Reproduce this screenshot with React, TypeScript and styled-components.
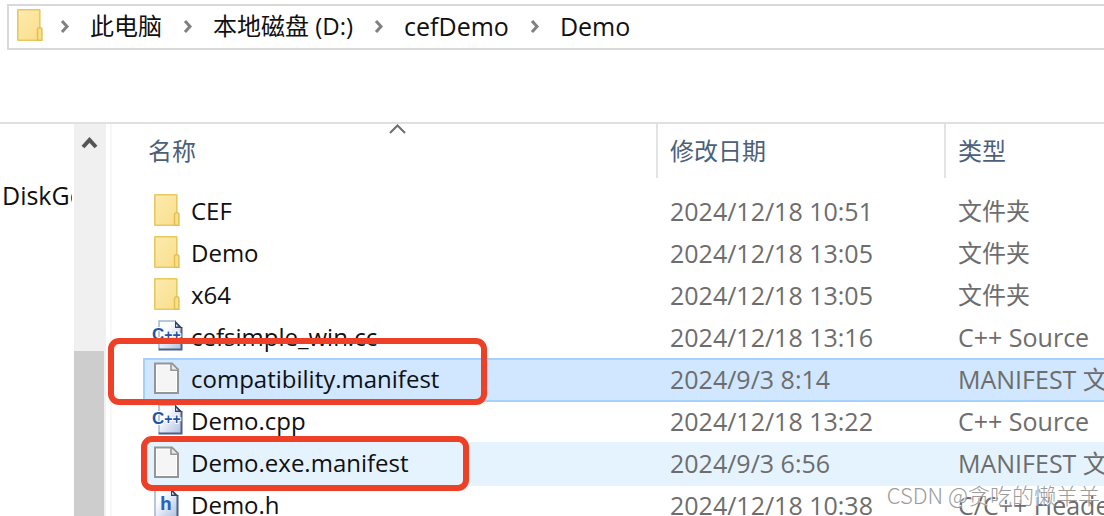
import React from "react";
import styled, { createGlobalStyle, css } from "styled-components";

const GlobalStyle = createGlobalStyle`
  * { box-sizing: border-box; }
  body {
    margin: 0;
    background: #fff;
    color: #101010;
    font: 24px/32px "Open Sans", "Noto Sans CJK SC", sans-serif;
  }
`;

const Window = styled.div`
  position: relative;
  display: flex;
  flex-direction: column;
  height: 100vh;
  overflow: hidden;
`;

const AddressBar = styled.nav`
  display: flex;
  align-items: center;
  flex: none;
  height: 46px;
  margin: 4px 0 72px 7px;
  padding: 0 0 2px 6px;
  border: 2px solid #d9d9d9;
  border-right: 0;
  white-space: nowrap;
`;

const CrumbList = styled.ol`
  display: flex;
  margin: 0 0 0 -8px;
  padding: 0;
  list-style: none;
`;

const Crumb = styled.li`
  display: flex;
  align-items: center;
`;

const CrumbLink = styled.a<{ $latin: boolean }>`
  color: inherit;
  font-size: ${(p) => (p.$latin ? 25 : 24)}px;
  text-decoration: none;
`;

const CrumbArrow = styled.svg`
  width: 51px;
  height: 32px;
  fill: none;
  stroke: #808080;
  stroke-width: 3;
`;

const Body = styled.div`
  display: flex;
  flex: 1;
  min-height: 0;
  border-top: 2px solid #e0e0e0;
`;

const Sidebar = styled.aside`
  flex: none;
  width: 72px;
  padding: 55px 0 0 2px;
  font-size: 25px;
  overflow: hidden;
  white-space: nowrap;
`;

const ScrollTrack = styled.div`
  display: flex;
  flex-direction: column;
  flex: none;
  width: 32px;
  margin: 0 4px 0 2px;
  background: #f0f0f0;
`;

const ScrollButton = styled.button`
  flex: none;
  height: 36px;
  padding: 0;
  border: 0;
  background: none;
  svg {
    display: block;
    fill: none;
    stroke: #555;
    stroke-width: 4;
  }
`;

const ScrollThumb = styled.div`
  flex: 1;
  width: 30px;
  margin-top: 191px;
  background: #cdcdcd;
`;

const Pane = styled.main`
  flex: 1;
  min-width: 0;
  padding-left: 31px;
  border-left: 2px solid #f7f7f7;
  overflow: hidden;
`;

const FileTable = styled.table`
  width: 100%;
  table-layout: fixed;
  border-spacing: 0;
  white-space: nowrap;
`;

const HeadCell = styled.th<{ $width?: number }>`
  width: ${(p) => (p.$width ? `${p.$width}px` : "auto")};
  padding: 0 0 12px;
  font-weight: 400;
`;

const SortButton = styled.button<{ $first?: boolean; $last?: boolean }>`
  position: relative;
  display: block;
  width: 100%;
  height: 54px;
  padding: 0 0 0 ${(p) => (p.$first ? 5 : 12)}px;
  border: 0;
  border-right: ${(p) => (p.$last ? "0" : "2px solid #e3e3e3")};
  background: none;
  color: #4c607a;
  font: inherit;
  text-align: left;
`;

const SortMark = styled.svg`
  position: absolute;
  top: 0;
  left: 50%;
  margin-left: -12px;
  fill: none;
  stroke: #6e6e6e;
  stroke-width: 2;
`;

const Row = styled.tr<{ $state?: "selected" | "hover" }>`
  height: 42px;
  ${(p) =>
    p.$state === "selected" &&
    css`
      background: #d0e7ff;
      box-shadow: 0 2px 0 #a3d1fb, inset 2px 2px 0 #a3d1fb;
    `}
  ${(p) =>
    p.$state === "hover" &&
    css`
      background: #e5f3ff;
      box-shadow: 0 2px 0 #e5f3ff;
    `}
`;

const Cell = styled.td<{ $latin: boolean }>`
  padding: 0 0 0 12px;
  color: #6d6d6d;
  font-size: ${(p) => (p.$latin ? 25 : 24)}px;
`;

const NameCell = styled.td`
  padding: 0 0 0 9px;
`;

const FileName = styled.div`
  display: flex;
  align-items: center;
  gap: 7px;
`;

const Icon = styled.svg`
  display: block;
  flex: none;
  width: 32px;
  height: 34px;
`;

const Highlight = styled.div<{ $x: number; $y: number; $w: number; $h: number }>`
  position: absolute;
  left: ${(p) => p.$x}px;
  top: ${(p) => p.$y}px;
  width: ${(p) => p.$w}px;
  height: ${(p) => p.$h}px;
  border: 6px solid #ee4027;
  border-radius: 11px;
  pointer-events: none;
`;

const Watermark = styled.div`
  position: absolute;
  right: 4px;
  bottom: 6px;
  color: #9c9c9c;
  font: 300 22px/32px "Noto Sans CJK SC", sans-serif;
  text-shadow: -1px -1px 0 #fff;
  white-space: nowrap;
`;

type Kind = "folder" | "cpp" | "file" | "header";

function FolderIcon() {
  return (
    <Icon viewBox="0 0 32 34" aria-hidden="true">
      <defs>
        <linearGradient id="folder" x1="0" y1="0" x2="1" y2="1">
          <stop offset="0" stopColor="#fdeab0" />
          <stop offset="1" stopColor="#f9df8a" />
        </linearGradient>
      </defs>
      <rect x="2.8" y="0.8" width="22" height="30.5" rx="0.5" fill="url(#folder)" stroke="#e8c860" strokeWidth="1.6" />
      <path d="M22.500 31.200V20.500q0-1.800 1.600-1.800h1q1.800 0 1.800 1.800v10.700z" fill="#f9df86" stroke="#e3c057" strokeWidth="1.5" />
    </Icon>
  );
}

function BlankIcon() {
  return (
    <Icon viewBox="0 0 32 34" aria-hidden="true">
      <path d="M3 1.500h17l6 6V31H3z" fill="#fff" stroke="#959595" strokeWidth="2" />
      <path d="M5 3.500h14v6h5V29H5z" fill="#f5f5f5" />
      <path d="M19 2v6.200h6.500" fill="#e8e8e8" stroke="#959595" strokeWidth="1.6" />
    </Icon>
  );
}

function CodeIcon({ header }: { header?: boolean }) {
  return (
    <Icon viewBox="0 0 32 34" aria-hidden="true">
      <defs>
        <linearGradient id="page" x1="0" y1="0" x2="1" y2="1">
          <stop offset="0.3" stopColor="#fbfcff" />
          <stop offset="1" stopColor="#aebfdf" />
        </linearGradient>
      </defs>
      <g transform={header ? "translate(-4 -1)" : "translate(0 -1)"}>
        <path d="M7 2h16.500l6 6v22.500H7z" fill="url(#page)" />
        <path d="M7 30V2h17" fill="none" stroke="#a5b4cc" strokeWidth="1.5" />
        <path d="M29.500 8v22.500H6.500" fill="none" stroke="#4a6087" strokeWidth="2" />
        <path d="M23 1.500l7.500 7.500H23z" fill="#33435e" />
        <path d="M24 7.500V5l2.500 2.500z" fill="#dfe7f5" />
      </g>
      {header ? (
        <text x="8" y="22" fill="#2a62b8" fontFamily="Open Sans, sans-serif" fontWeight="700" fontSize="18">
          h
        </text>
      ) : (
        <text
          x="0"
          y="20"
          fill="#1d55ac"
          stroke="#fff"
          strokeWidth="2"
          paintOrder="stroke"
          fontFamily="Liberation Sans, sans-serif"
          fontWeight="700"
          fontSize="17"
        >
          C<tspan fontSize="14">++</tspan>
        </text>
      )}
    </Icon>
  );
}

function FileIcon({ kind }: { kind: Kind }) {
  if (kind === "folder") return <FolderIcon />;
  if (kind === "file") return <BlankIcon />;
  return <CodeIcon header={kind === "header"} />;
}

const startsLatin = (text: string) => /^[\x20-\x7e]/.test(text);

const crumbs = ["此电脑", "本地磁盘 (D:)", "cefDemo", "Demo"];

const files: { name: string; date: string; type: string; kind: Kind; state?: "selected" | "hover" }[] = [
  { name: "CEF", date: "2024/12/18 10:51", type: "文件夹", kind: "folder" },
  { name: "Demo", date: "2024/12/18 13:05", type: "文件夹", kind: "folder" },
  { name: "x64", date: "2024/12/18 13:05", type: "文件夹", kind: "folder" },
  { name: "cefsimple_win.cc", date: "2024/12/18 13:16", type: "C++ Source", kind: "cpp" },
  { name: "compatibility.manifest", date: "2024/9/3 8:14", type: "MANIFEST 文件", kind: "file", state: "selected" },
  { name: "Demo.cpp", date: "2024/12/18 13:22", type: "C++ Source", kind: "cpp" },
  { name: "Demo.exe.manifest", date: "2024/9/3 6:56", type: "MANIFEST 文件", kind: "file", state: "hover" },
  { name: "Demo.h", date: "2024/12/18 10:38", type: "C/C++ Header", kind: "header" },
];

export default function App() {
  return (
    <Window>
      <GlobalStyle />
      <AddressBar aria-label="路径">
        <FolderIcon />
        <CrumbList>
          {crumbs.map((crumb) => (
            <Crumb key={crumb}>
              <CrumbArrow viewBox="0 0 51 32" aria-hidden="true">
                <path d="M23 11l5 5.500-5 5.500" />
              </CrumbArrow>
              <CrumbLink href="#" $latin={startsLatin(crumb)}>
                {crumb}
              </CrumbLink>
            </Crumb>
          ))}
        </CrumbList>
      </AddressBar>
      <Body>
        <Sidebar>DiskGenius</Sidebar>
        <ScrollTrack>
          <ScrollButton aria-label="向上滚动">
            <svg width="32" height="36" viewBox="0 0 32 36">
              <path d="M9 23l6.500-7 6.500 7" />
            </svg>
          </ScrollButton>
          <ScrollThumb />
        </ScrollTrack>
        <Pane>
          <FileTable>
            <thead>
              <tr>
                <HeadCell $width={515}>
                  <SortButton $first>
                    名称
                    <SortMark width="20" height="12" viewBox="0 0 20 12" aria-hidden="true">
                      <path d="M2 9l7.500-7.500L17 9" />
                    </SortMark>
                  </SortButton>
                </HeadCell>
                <HeadCell $width={288}>
                  <SortButton>修改日期</SortButton>
                </HeadCell>
                <HeadCell>
                  <SortButton $last>类型</SortButton>
                </HeadCell>
              </tr>
            </thead>
            <tbody>
              {files.map((file) => (
                <Row key={file.name} $state={file.state}>
                  <NameCell>
                    <FileName>
                      <FileIcon kind={file.kind} />
                      {file.name}
                    </FileName>
                  </NameCell>
                  <Cell $latin>{file.date}</Cell>
                  <Cell $latin={startsLatin(file.type)}>{file.type}</Cell>
                </Row>
              ))}
            </tbody>
          </FileTable>
        </Pane>
      </Body>
      <Highlight $x={108} $y={338} $w={379} $h={67} />
      <Highlight $x={141} $y={436} $w={328} $h={55} />
      <Watermark>CSDN @贪吃的懒羊羊</Watermark>
    </Window>
  );
}
